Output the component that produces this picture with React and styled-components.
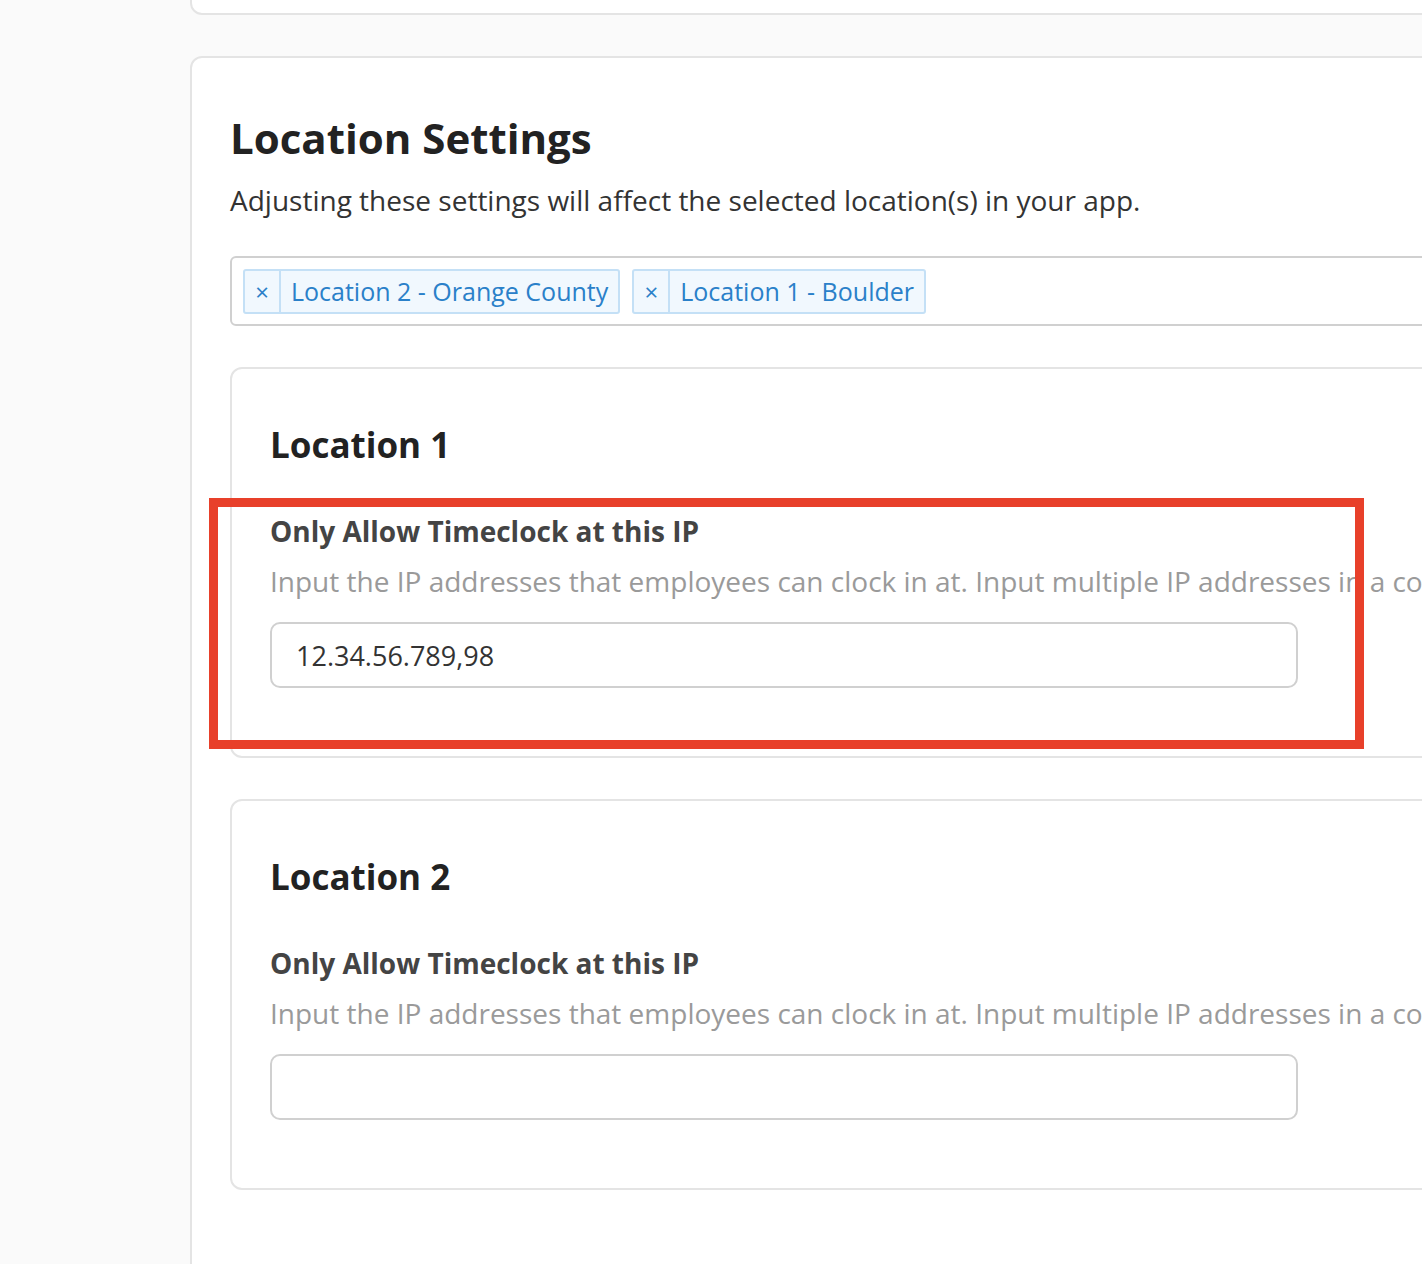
import React from "react";
import styled, { createGlobalStyle } from "styled-components";

const Global = createGlobalStyle`
  html, body { margin: 0; padding: 0; background: #fafafa; overflow: hidden; }
  body { font-family: "Open Sans", "Noto Sans", sans-serif; color: #222; }
`;

const Page = styled.div`
  position: relative;
  width: 1422px;
  height: 1264px;
  overflow: hidden;
  padding-left: 190px;
  box-sizing: border-box;
`;

const Card = styled.div`
  background: #fff;
  border: 2px solid #e4e4e4;
  border-radius: 12px;
  box-sizing: border-box;
  width: 1400px;
`;

const TopCard = styled(Card)`
  height: 26px;
  margin-top: -11px;
`;

const MainCard = styled(Card)`
  margin-top: 41px;
  padding: 40px 0 120px 38px;
`;

const Title = styled.h1`
  margin: 16px 0 0;
  font-size: 42px;
  line-height: 48px;
  font-weight: 700;
  color: #222;
`;

const Subtitle = styled.p`
  margin: 20px 0 0;
  font-size: 28px;
  line-height: 36px;
  color: #333;
`;

const TagBox = styled.div`
  margin-top: 38px;
  height: 70px;
  border: 2px solid #d0d0d0;
  border-radius: 6px;
  box-sizing: border-box;
  display: flex;
  align-items: center;
  gap: 12px;
  padding-left: 11px;
`;

const Tag = styled.div`
  display: flex;
  height: 45px;
  box-sizing: border-box;
  border: 2px solid #c4e0f6;
  background: #f1f8fe;
  border-radius: 3px;
  color: #2a80c9;
  font-size: 25px;
  align-items: center;
`;

const TagX = styled.span`
  width: 34px;
  height: 100%;
  display: flex;
  align-items: center;
  justify-content: center;
  border-right: 2px solid #c4e0f6;
  font-size: 24px;
`;

const TagLabel = styled.span`
  padding: 0 10px 0 10px;
`;

const LocCard = styled(Card)`
  margin-top: 41px;
  padding: 40px 0 68px 38px;
`;

const LocTitle = styled.h2`
  margin: 15px 0 0;
  font-size: 35px;
  line-height: 41px;
  font-weight: 700;
  color: #222;
`;

const Label = styled.div`
  margin-top: 48px;
  font-size: 28px;
  line-height: 36px;
  font-weight: 700;
  color: #444;
`;

const Desc = styled.div`
  margin-top: 14px;
  font-size: 28px;
  line-height: 36px;
  color: #9a9a9a;
  white-space: nowrap;
`;

const Input = styled.div`
  margin-top: 23px;
  width: 1028px;
  height: 66px;
  border: 2px solid #d0d0d0;
  border-radius: 10px;
  box-sizing: border-box;
  padding-left: 24px;
  display: flex;
  align-items: center;
  font-size: 27px;
  color: #333;
`;

const Highlight = styled.div`
  position: absolute;
  left: 209px;
  top: 498px;
  width: 1155px;
  height: 251px;
  border: 9px solid #e8402a;
  box-sizing: border-box;
  pointer-events: none;
`;

const desc =
  "Input the IP addresses that employees can clock in at. Input multiple IP addresses in a comma separated list.";

function Location({ n, value }) {
  return (
    <LocCard>
      <LocTitle>Location {n}</LocTitle>
      <Label>Only Allow Timeclock at this IP</Label>
      <Desc>{desc}</Desc>
      <Input>{value}</Input>
    </LocCard>
  );
}

export default function App() {
  return (
    <Page>
      <Global />
      <TopCard />
      <MainCard>
        <Title>Location Settings</Title>
        <Subtitle>Adjusting these settings will affect the selected location(s) in your app.</Subtitle>
        <TagBox>
          <Tag><TagX>×</TagX><TagLabel>Location 2 - Orange County</TagLabel></Tag>
          <Tag><TagX>×</TagX><TagLabel>Location 1 - Boulder</TagLabel></Tag>
        </TagBox>
        <Location n={1} value="12.34.56.789,98" />
        <Location n={2} value="" />
      </MainCard>
      <Highlight />
    </Page>
  );
}
